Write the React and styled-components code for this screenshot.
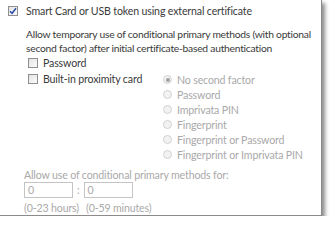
import React from "react"
import styled, { createGlobalStyle } from "styled-components"

const Global = createGlobalStyle`
body{margin:0;background:#fff;font-family:Lato,"Open Sans",sans-serif;}
*{box-sizing:border-box;}
`
const Panel = styled.div`
width:322px;
height:216px;
background:#fff;
border-right:1px solid #8a8a8a;
border-bottom:1px solid #8a8a8a;
box-shadow:3px 3px 4px rgba(0,0,0,0.45);
padding:5px 0 0 8px;
font-size:10.6px;
letter-spacing:-0.15px;
color:#3a3a3a;
display:flex;
flex-direction:column;
white-space:nowrap;
`
const Row = styled.div`
display:flex;
align-items:center;
gap:${p => p.gap || 5}px;
height:${p => p.h || 14}px;
`
const Box = styled.span`
width:10px;
height:10px;
border:1px solid #8f8f8f;
background:linear-gradient(135deg,#e4e4e4,#fbfbfb);
display:inline-flex;
align-items:center;
justify-content:center;
flex:none;
`
const Para = styled.div`
margin:10px 0 0 18px;
line-height:14px;
font-size:10.3px;
letter-spacing:-0.25px;
`
const Options = styled.div`
display:flex;
margin:1px 0 0 20px;
`
const Checks = styled.div`
display:flex;
flex-direction:column;
gap:2px;
width:135px;
`
const Radios = styled.div`
display:flex;
flex-direction:column;
color:#a9a9a9;
margin-top:16px;
`
const RadioDot = styled.span`
width:9px;
height:9px;
border-radius:50%;
border:1px solid #d2d2d2;
background:#f2f2f2;
display:inline-flex;
align-items:center;
justify-content:center;
flex:none;
&::after{
  content:"";
  width:4px;
  height:4px;
  border-radius:50%;
  background:${p => p.on ? "#a0a0a0" : "transparent"};
}
`
const Duration = styled.div`
margin:6px 0 0 16px;
color:#a9a9a9;
display:flex;
flex-direction:column;
line-height:14px;
`
const Inputs = styled.div`
display:flex;
align-items:center;
gap:4px;
margin-top:0;
`
const Field = styled.div`
width:49px;
height:16px;
border:1px solid #c4c4c4;
padding:0 3px;
line-height:14px;
`
const Hints = styled.div`
display:flex;
gap:7px;
margin-top:3px;
`

const Check = ({ checked }) => (
  <Box>
    {checked && (
      <svg width="8" height="8" viewBox="0 0 8 8">
        <path d="M1 4.2 L3.1 6.3 L7 1.3" fill="none" stroke="#2b4fa8" strokeWidth="1.5" />
      </svg>
    )}
  </Box>
)

const radios = ["No second factor", "Password", "Imprivata PIN", "Fingerprint", "Fingerprint or Password", "Fingerprint or Imprivata PIN"]

export default function App() {
  return (
    <>
      <Global />
      <Panel>
        <Row h={14} gap={8}><Check checked />Smart Card or USB token using external certificate</Row>
        <Para>Allow temporary use of conditional primary methods (with optional<br />second factor) after initial certificate-based authentication</Para>
        <Options>
          <Checks>
            <Row h={14}><Check />Password</Row>
            <Row h={14}><Check />Built-in proximity card</Row>
          </Checks>
          <Radios>
            {radios.map((r, i) => (
              <Row key={r} h={15}><RadioDot on={i === 0} />{r}</Row>
            ))}
          </Radios>
        </Options>
        <Duration>
          <span>Allow use of conditional primary methods for:</span>
          <Inputs><Field>0</Field>:<Field>0</Field></Inputs>
          <Hints><span>(0-23 hours)</span><span>(0-59 minutes)</span></Hints>
        </Duration>
      </Panel>
    </>
  )
}
